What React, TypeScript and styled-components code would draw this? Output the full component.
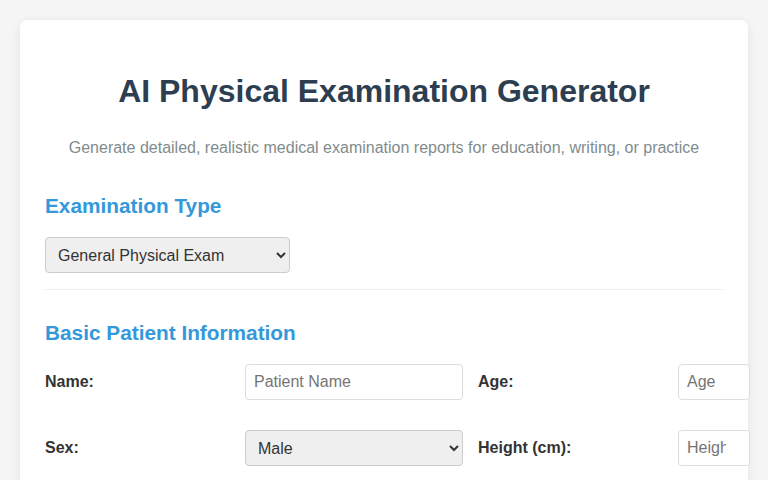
import React from "react";
import styled, { createGlobalStyle } from "styled-components";

const GlobalStyle = createGlobalStyle`
  * {
    box-sizing: border-box;
  }

  body {
    margin: 0;
    background: #f5f5f5;
    font-family: "Liberation Sans", Arial, sans-serif;
    color: #333;
  }
`;

const Page = styled.div`
  padding: 20px;
  min-height: 480px;
`;

const Card = styled.main`
  background: #fff;
  border-radius: 8px;
  box-shadow: 0 2px 10px rgba(0, 0, 0, 0.08);
  padding: 26px 25px 30px;
`;

const Title = styled.h1`
  margin: 25px 0 0;
  font-size: 32px;
  line-height: 40px;
  font-weight: 700;
  text-align: center;
  color: #2c3e50;
`;

const Subtitle = styled.p`
  margin: 27px 0 0;
  font-size: 16px;
  line-height: 20px;
  text-align: center;
  color: #7f8c8d;
`;

const Section = styled.section<{ $divider?: boolean }>`
  padding-bottom: ${(p) => (p.$divider ? "16px" : "0")};
  border-bottom: ${(p) => (p.$divider ? "1px solid #eee" : "none")};
`;

const SectionTitle = styled.h2<{ $top: number }>`
  margin: ${(p) => p.$top}px 0 0;
  font-size: 20.8px;
  line-height: 24px;
  font-weight: 700;
  color: #3498db;
`;

const Select = styled.select<{ $w: number; $top?: number }>`
  display: block;
  width: ${(p) => p.$w}px;
  height: 36px;
  margin-top: ${(p) => p.$top ?? 0}px;
  padding: 0 8px;
  font-family: "Liberation Sans", Arial, sans-serif;
  font-size: 16px;
  color: #333;
  background-color: #efefef;
  border: 1px solid #ccc;
  border-radius: 4px;
`;

const Input = styled.input<{ $w: number }>`
  display: block;
  width: ${(p) => p.$w}px;
  height: 36px;
  padding: 0 8px;
  font-family: "Liberation Sans", Arial, sans-serif;
  font-size: 16px;
  color: #333;
  background: #fff;
  border: 1px solid #ddd;
  border-radius: 4px;

  &::placeholder {
    color: #757575;
  }
`;

const Form = styled.div`
  display: flex;
  flex-direction: column;
  gap: 30px;
  margin-top: 19px;
`;

const Row = styled.div`
  display: flex;
  gap: 15px;
`;

const Field = styled.div`
  display: flex;
  align-items: center;
`;

const Label = styled.label`
  width: 200px;
  flex-shrink: 0;
  font-size: 16px;
  font-weight: 700;
  color: #333;
`;

export default function App() {
  return (
    <>
      <GlobalStyle />
      <Page>
        <Card>
          <Title>AI Physical Examination Generator</Title>
          <Subtitle>
            Generate detailed, realistic medical examination reports for
            education, writing, or practice
          </Subtitle>

          <Section $divider>
            <SectionTitle $top={36}>Examination Type</SectionTitle>
            <Select $w={245} $top={19} defaultValue="general">
              <option value="general">General Physical Exam</option>
              <option value="cardio">Cardiovascular Exam</option>
              <option value="neuro">Neurological Exam</option>
            </Select>
          </Section>

          <Section>
            <SectionTitle $top={31}>Basic Patient Information</SectionTitle>
            <Form>
              <Row>
                <Field>
                  <Label>Name:</Label>
                  <Input $w={218} placeholder="Patient Name" />
                </Field>
                <Field>
                  <Label>Age:</Label>
                  <Input $w={72} type="number" placeholder="Age" />
                </Field>
              </Row>
              <Row>
                <Field>
                  <Label>Sex:</Label>
                  <Select $w={218} defaultValue="male">
                    <option value="male">Male</option>
                    <option value="female">Female</option>
                    <option value="other">Other</option>
                  </Select>
                </Field>
                <Field>
                  <Label>Height (cm):</Label>
                  <Input $w={72} type="number" placeholder="Height" />
                </Field>
              </Row>
            </Form>
          </Section>
        </Card>
      </Page>
    </>
  );
}
